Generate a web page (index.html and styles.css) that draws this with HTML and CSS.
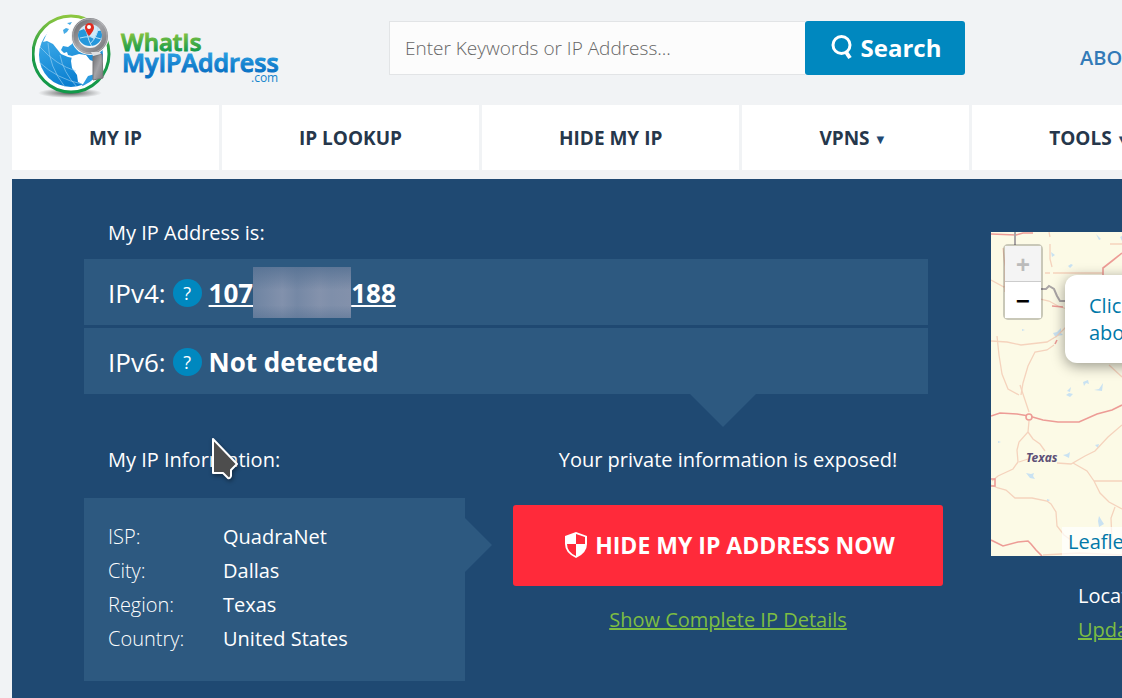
FILE: index.html
```html
<!DOCTYPE html>
<html lang="en">
<head>
  <meta charset="UTF-8">
  <meta name="viewport" content="width=device-width, initial-scale=1">
  <title>What Is My IP Address</title>
  <link rel="stylesheet" href="styles.css">
</head>
<body>

<header class="header">
  <a href="#" class="logo" aria-label="WhatIsMyIPAddress.com">
    <svg width="248" height="92" viewBox="0 0 248 92">
      <defs>
        <linearGradient id="ring" x1="0" y1="0" x2="0" y2="1">
          <stop offset="0" stop-color="#8cc63f"/>
          <stop offset="0.5" stop-color="#1c9a48"/>
          <stop offset="1" stop-color="#12994a"/>
        </linearGradient>
        <linearGradient id="sea" x1="0" y1="0" x2="0.3" y2="1">
          <stop offset="0" stop-color="#4fb4ea"/>
          <stop offset="0.5" stop-color="#2b9be0"/>
          <stop offset="1" stop-color="#0a7fd0"/>
        </linearGradient>
        <linearGradient id="metal" x1="0" y1="0" x2="1" y2="1">
          <stop offset="0" stop-color="#6b6b6e"/>
          <stop offset="0.5" stop-color="#a4a4a8"/>
          <stop offset="1" stop-color="#77777a"/>
        </linearGradient>
        <linearGradient id="green-text" x1="0" y1="0" x2="0" y2="1">
          <stop offset="0.2" stop-color="#8cc63f"/>
          <stop offset="0.8" stop-color="#12994a"/>
        </linearGradient>
        <linearGradient id="blue-text" x1="0" y1="0" x2="0" y2="1">
          <stop offset="0.2" stop-color="#2aa0e2"/>
          <stop offset="0.8" stop-color="#0a72c4"/>
        </linearGradient>
        <radialGradient id="shade">
          <stop offset="0" stop-color="#444" stop-opacity="0.9"/>
          <stop offset="1" stop-color="#555" stop-opacity="0"/>
        </radialGradient>
        <clipPath id="globe"><circle cx="39" cy="45" r="33"/></clipPath>
        <clipPath id="lens"><ellipse cx="58" cy="25" rx="12" ry="11"/></clipPath>
      </defs>
      <ellipse cx="38" cy="83" rx="32" ry="5" fill="url(#shade)"/>
      <circle cx="39" cy="44" r="38" fill="#fff" stroke="url(#ring)" stroke-width="3"/>
      <circle cx="39" cy="45" r="32" fill="url(#sea)"/>
      <g clip-path="url(#globe)">
        <path d="M11 32L17 19L27 11L42 10L50 14L44 24L42 29L40 34L36 37L31 36L29 40L32 43L35 42L36 45L40 46L41 48L36 47L29 44L25 39L21 34L15 31Z" fill="#fff"/>
        <path d="M40 46L47 44L54 45L58 50L66 53L76 48L74 62L60 78L50 74L46 72L45 65L40 58L39 51Z" fill="#fff"/>
        <path d="M56 66l7-2 3 3-8 11-10 1z" fill="#2b9be0"/>
        <path d="M31 20l3-2 3 1-2 3-3 2zM42 29l7 3 3 6-5-1-3 2-3-4zM35 13l5-1-2 3z" fill="#45abe5"/>
        <path d="M42 35l4 1M46 40l6 2" stroke="#fff" stroke-width="2"/>
        <path d="M8 37Q24 55 44 61M7 52Q25 69 50 74M16 33Q17 57 33 77M28 45Q31 62 45 77" fill="none" stroke="#a4d5f3" stroke-width="0.6"/>
      </g>
      <circle cx="58" cy="26" r="19" fill="#f1f3f5"/>
      <ellipse cx="58" cy="25" rx="12" ry="11" fill="#cfeaf9"/>
      <g clip-path="url(#lens)">
        <path d="M44 22l8-3 5 7 5 3 4-8 8-1-4 15-13 4-12-5z" fill="#2597db"/>
        <path d="M48 28q10-3 21 1M55 14q-2 10 5 23M66 17q0 9-8 17" fill="none" stroke="#b9e0f6"/>
      </g>
      <circle cx="58" cy="26" r="15" fill="none" stroke="url(#metal)" stroke-width="6"/>
      <circle cx="58" cy="26" r="17" fill="none" stroke="#c5c5c8" stroke-width="0.6"/>
      <path d="M61 46l9-2 1 24-10 2z" fill="url(#metal)" stroke="#77777a"/>
      <path d="M59 42h9l1 2-8 2z" fill="#dedfe1"/>
      <path d="M57 26Q53 21 53 17.500A4.300 4.300 0 0 1 62 17.500Q62 21 57 26z" fill="#e02b20"/>
      <circle cx="57" cy="17" r="2" fill="#fff"/>
      <text class="logo-green" x="89" y="41" fill="url(#green-text)" stroke="url(#green-text)">WhatIs</text>
      <text class="logo-blue" x="90" y="62" fill="url(#blue-text)" stroke="url(#blue-text)">MyIPAddress</text>
      <text class="logo-com" x="219" y="72">.com</text>
    </svg>
  </a>

  <form class="search">
    <input type="text" class="search-input" aria-label="Search" placeholder="Enter Keywords or IP Address...">
    <button type="button" class="search-button">
      <svg width="22" height="26" viewBox="0 0 22 26" fill="none" stroke="#fff" stroke-width="3">
        <circle cx="10.500" cy="11" r="8.500"/>
        <path d="M15 18l4 6" stroke-width="4"/>
      </svg>
      Search
    </button>
  </form>

  <a href="#" class="about">ABOUT US</a>
</header>

<nav class="nav">
  <a href="#">MY IP</a>
  <a href="#">IP LOOKUP</a>
  <a href="#">HIDE MY IP</a>
  <a href="#" class="has-menu">VPNS <span class="caret">▼</span></a>
  <a href="#" class="has-menu">TOOLS <span class="caret">▼</span></a>
</nav>

<main class="panel">
  <div class="details">
    <h2 class="title">My IP Address is:</h2>
    <div class="ip-list">
      <div class="ip-row">
        <span class="ip-label">IPv4:</span>
        <a href="#" class="help" aria-label="About IPv4">?</a>
        <a href="#" class="ip">107</a><span class="hidden-part"></span><a href="#" class="ip">188</a>
      </div>
      <div class="ip-row">
        <span class="ip-label">IPv6:</span>
        <a href="#" class="help" aria-label="About IPv6">?</a>
        <span class="ip">Not detected</span>
      </div>
    </div>

    <div class="lower">
      <section>
        <h2 class="title">My IP Information:
          <svg class="pointer" width="32" height="46" viewBox="0 0 32 46">
            <path d="M3 3V37H13L18 42Q20 43 21 40V34L27 28Z" fill="#4d4d4d" stroke="#fff" stroke-width="2" stroke-linejoin="round"/>
          </svg>
        </h2>
        <div class="info">
          <table>
            <tr><th>ISP:</th><td>QuadraNet</td></tr>
            <tr><th>City:</th><td>Dallas</td></tr>
            <tr><th>Region:</th><td>Texas</td></tr>
            <tr><th>Country:</th><td>United States</td></tr>
          </table>
        </div>
      </section>

      <section class="exposed">
        <p class="warning">Your private information is exposed!</p>
        <button type="button" class="hide-button">
          <svg width="22" height="26" viewBox="0 0 22 26">
            <path d="M11 0L22 4V12Q22 21 11 26Q0 21 0 12V4Z" fill="#fff"/>
            <path d="M11 2L20 5V12H11ZM11 12V24Q2 20 2 12Z" fill="#ff2a3a"/>
          </svg>
          HIDE MY IP ADDRESS NOW
        </button>
        <a href="#" class="green-link">Show Complete IP Details</a>
      </section>
    </div>
  </div>

  <aside class="location">
    <div class="map">
      <svg class="tiles" viewBox="0 0 131 324" preserveAspectRatio="xMinYMin slice" fill="none">
        <rect width="131" height="324" fill="#fcfae6"/>
        <g fill="#c9e2f2">
          <path d="M105 2l5 5-2 1zM60 20l4 3-3 2zM77 34l3-2 2 1-3 3zM129 5l2-1v5zM62 101l4-1 4-4v5l2 2-6 1-1 2zM31 97l3 1-3 1zM92 150l5-2 1 4-3-1-2 3zM103 158l5-1 4-6-1 8zM76 159l4-4-1 5zM75 163l3-2 4 1-3 3zM35 241l5 1 3-1-1 3 2 3-5-1zM72 223l4-1 3-2-1 6zM104 213l4-1-1 4zM108 284l3 5 2 3-5 3-1-6zM56 267l3 1-3 2zM7 209l3 1-3 1z"/>
        </g>
        <g stroke="#f5d3bd" stroke-width="1.300">
          <path d="M58 0l1 5M59 12v15l2 8M54 41h5M62 41h50M119 12h12M12 16l2 19v25M0 48l13 7 15 1 12 9 18 4 9 5 9 3"/>
          <path d="M0 109l16 1 14 3 26-3 10-6 10-10M6 104l2 19 3 19 6 15 11 6M63 113l-7 5-12 2-7 14-5 17-2 12M118 133l13 12"/>
          <path d="M29 153l9 27M38 189l-1 11-9 10-2 8 1 12-5 7-15 7-6 5M37 200l5 7 7 5 5 7M28 230l9-3M66 231l14 1 14-8 10-5 13-14 14-12M82 231l14 8 7 10 6 12 9 9 13 7M103 249h28M124 275l-4 11 1 24M0 253l7 3 8 2 9 8 17 0 15 3 4 3 5 8 1 14 7 9 7 5"/>
          <path d="M52 323l36-2 43 2"/>
        </g>
        <g stroke="#ed9c96" stroke-width="1.600">
          <path d="M0 2l25 1 7-2h10M112 50V36l9-7 10-8M0 184l9-3 17 1 12 2 14 4 15 2h21l18-8 15-4 10-5M0 308l12 6 15-4 10-1 3 3 5 6 6 6"/>
          <circle cx="38" cy="185" r="3" fill="#fcfae6"/>
          <path d="M0 247h4v7H0M61 74l11 1M64 112l2-4"/>
        </g>
        <path d="M24 0v13M50 57h5l3-3 5 3 3 7 3 5h6" stroke="#aaa5a5" stroke-width="2"/>
        <text class="state" x="35" y="230">Texas</text>
      </svg>
      <div class="zoom">
        <button type="button" aria-label="Zoom in" disabled>+</button>
        <button type="button" aria-label="Zoom out">−</button>
      </div>
      <a href="#" class="popup">Click for more details<br>about this location</a>
      <a href="#" class="credit">Leaflet</a>
    </div>
    <p class="accuracy">Location not accurate?<br><a href="#" class="green-link">Update your location</a></p>
  </aside>
</main>

</body>
</html>
```
FILE: styles.css
```css
* {
  box-sizing: border-box;
}

body {
  margin: 0;
  padding-left: 12px;
  background: #f1f3f5;
  font-family: 'Open Sans', sans-serif;
  font-size: 20px;
  color: #fff;
  min-height: 100vh;
  display: flex;
  flex-direction: column;
  overflow: hidden;
}

/* header */
.header {
  display: flex;
  align-items: flex-start;
  height: 105px;
  padding: 10px 0 0 20px;
}

.logo {
  width: 248px;
  flex: none;
}

.logo svg {
  display: block;
}

.logo-green,
.logo-blue {
  font-size: 24px;
  font-weight: 600;
}

.logo-blue {
  font-size: 25px;
}

.logo-com {
  font-size: 12px;
  fill: #1484cc;
}

.search {
  display: flex;
  flex: 1;
  height: 54px;
  margin: 11px 115px 0 109px;
}

.search-input {
  flex: 1;
  min-width: 0;
  padding: 0 15px;
  border: 1px solid #e2e4e6;
  border-right: 0;
  background: #fcfcfc;
  font-family: inherit;
  font-size: 19px;
  font-weight: 300;
}

.search-input::placeholder {
  color: #666;
}

.search-button {
  width: 160px;
  display: flex;
  align-items: center;
  justify-content: center;
  gap: 8px;
  padding: 0 4px 2px 6px;
  border: 0;
  border-radius: 3px;
  background: #0088bf;
  color: #fff;
  font-family: inherit;
  font-size: 24px;
  font-weight: 700;
}

.about {
  width: 42px;
  margin-top: 34px;
  color: #337ab7;
  font-weight: 600;
  text-decoration: none;
  white-space: nowrap;
}

/* main menu */
.nav {
  display: flex;
  gap: 3px;
  height: 65px;
  margin-bottom: 9px;
}

.nav a {
  flex: none;
  padding: 2px 77px 0;
  background: #fff;
  color: #26374b;
  font-size: 19px;
  font-weight: 700;
  line-height: 63px;
  text-decoration: none;
  white-space: nowrap;
}

.nav .has-menu {
  padding-right: 85px;
}

.caret {
  margin-left: 2px;
  font-family: 'DejaVu Sans', sans-serif;
  font-size: 10px;
  color: #1f4972;
  vertical-align: 2px;
}

/* blue panel */
.panel {
  flex: 1;
  display: flex;
  gap: 63px;
  padding: 39px 0 17px 72px;
  background: #1f4972;
}

.details {
  flex: 1;
}

.title {
  position: relative;
  margin: 0 24px;
  font-size: 20px;
  font-weight: 400;
  line-height: 30px;
}

.ip-list {
  position: relative;
  display: grid;
  gap: 3px;
  margin: 11px 0 51px;
}

.ip-list::after {
  content: "";
  position: absolute;
  top: 100%;
  right: 172px;
  border: 33px solid transparent;
  border-top-color: #2d5980;
  border-bottom: 0;
}

.ip-row {
  display: flex;
  align-items: center;
  height: 66px;
  padding: 1px 24px 0;
  background: #2d5980;
  font-size: 26px;
}

.help {
  width: 29px;
  height: 28px;
  margin: 0 7px;
  border-radius: 50%;
  background: #0088bf;
  color: #fff;
  font-size: 18px;
  line-height: 28px;
  text-align: center;
  text-decoration: none;
}

.ip {
  color: #fff;
  font-weight: 700;
}

.hidden-part {
  width: 98px;
  height: 51px;
  background:
    linear-gradient(rgba(84, 112, 146, 0.8), transparent 45%, transparent 75%, rgba(84, 112, 146, 0.5)),
    linear-gradient(90deg, #6e84a2, #8291ac 30%, #7588a5 45%, #8492ac 68%, #7f8faa 80%, #8391ab);
}

.lower {
  display: grid;
  grid-template-columns: 381fr 430fr;
  gap: 48px;
  margin-right: -15px;
}

.pointer {
  position: absolute;
  left: 102px;
  top: -9px;
  filter: drop-shadow(1px 2px 2px rgba(0, 0, 0, 0.4));
}

.info {
  position: relative;
  margin-top: 23px;
  padding: 22px 24px 25px;
  background: #2d5980;
}

.info::after {
  content: "";
  position: absolute;
  top: 20px;
  left: 100%;
  border: 27px solid transparent;
  border-left-color: #2d5980;
  border-right: 0;
}

.info table {
  border-collapse: collapse;
}

.info th,
.info td {
  padding: 0;
  line-height: 34px;
  text-align: left;
}

.info th {
  width: 115px;
  font-weight: 300;
}

.exposed {
  text-align: center;
}

.warning {
  margin: 0 0 30px;
  line-height: 30px;
}

.hide-button {
  display: flex;
  align-items: center;
  justify-content: center;
  gap: 8px;
  width: 100%;
  height: 81px;
  padding: 0 0 2px 4px;
  margin-bottom: 19px;
  border: 0;
  border-radius: 3px;
  background: #ff2a3a;
  color: #fff;
  font-family: inherit;
  font-size: 23px;
  font-weight: 700;
}

.green-link {
  color: #7dbd42;
  line-height: 30px;
}

/* map column */
.location {
  flex: 0 0 131px;
  min-width: 0;
  padding-top: 14px;
  overflow: hidden;
  white-space: nowrap;
}

.map {
  position: relative;
  height: 324px;
  overflow: hidden;
}

.tiles {
  display: block;
  width: 100%;
  height: 100%;
}

.state {
  fill: #5d5077;
  font-family: 'Noto Sans', sans-serif;
  font-size: 12px;
  font-style: italic;
  font-weight: 700;
}

.zoom {
  position: absolute;
  left: 12px;
  top: 12px;
  border: 2px solid rgba(0, 0, 0, 0.2);
  border-radius: 5px;
  background-clip: padding-box;
}

.zoom button {
  display: block;
  width: 36px;
  height: 36px;
  padding: 6px 0 0;
  border: 0;
  background: #fff;
  color: #000;
  font-family: 'Liberation Mono', monospace;
  font-size: 24px;
  font-weight: 700;
  line-height: 30px;
}

.zoom button:first-child {
  border-bottom: 1px solid #ccc;
  background: #f4f4f4;
  color: #bbb;
}

.popup {
  position: absolute;
  left: 74px;
  top: 43px;
  padding: 17px 24px;
  border-radius: 12px;
  background: #fff;
  box-shadow: 0 3px 14px rgba(0, 0, 0, 0.4);
  color: #0078a8;
  line-height: 27px;
  text-decoration: none;
}

.credit {
  position: absolute;
  left: 71px;
  bottom: 0;
  padding: 0 6px;
  background: rgba(255, 255, 255, 0.7);
  color: #0078a8;
  line-height: 29px;
  text-decoration: none;
}

.accuracy {
  margin: 23px 0 0 87px;
  line-height: 34px;
}
```
